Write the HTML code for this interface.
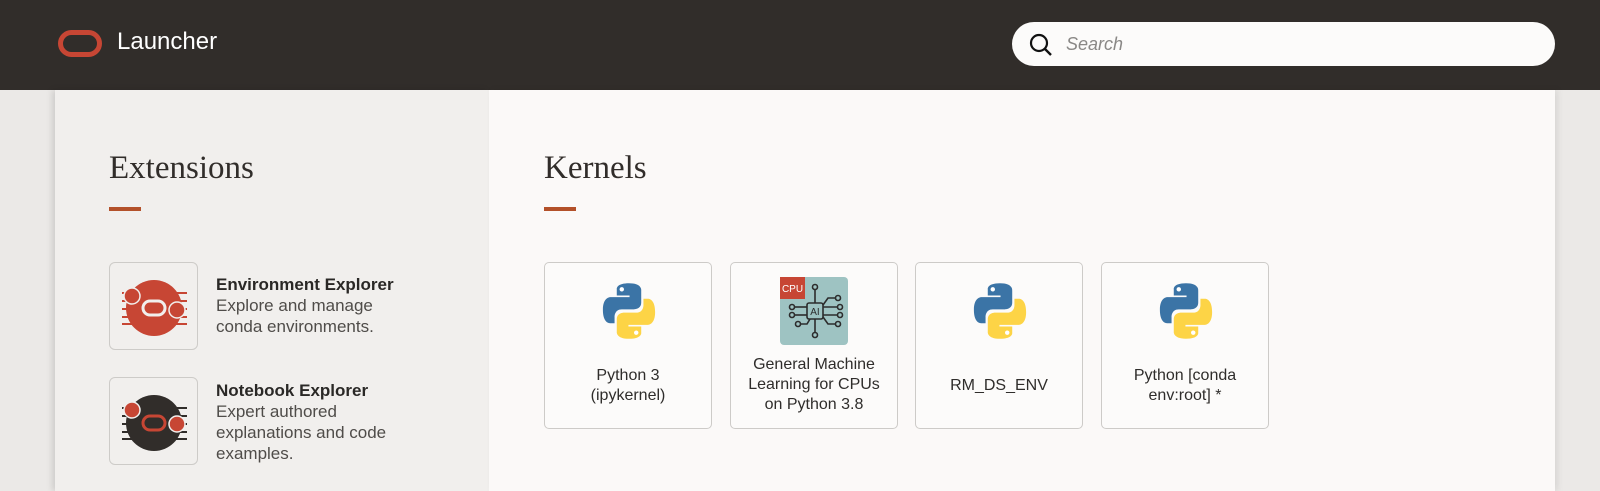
<!DOCTYPE html>
<html><head><meta charset="utf-8"><style>
*{margin:0;padding:0;box-sizing:border-box}
body{width:1600px;height:491px;overflow:hidden;background:#ebe9e7;font-family:"Liberation Sans",sans-serif;position:relative}
.hdr{position:absolute;left:0;top:0;width:1600px;height:90px;background:#312d2a}
.logo{position:absolute;left:58px;top:30px;width:44px;height:27px;border:5px solid #c74634;border-radius:14px}
.title{position:absolute;left:117px;top:28px;color:#fff;font-size:24px}
.search{position:absolute;left:1012px;top:22px;width:543px;height:44px;background:#fcfbfa;border-radius:22px}
.search span{position:absolute;left:54px;top:12px;font-style:italic;color:#8a8886;font-size:18px}
.left{position:absolute;left:55px;top:90px;width:434px;height:401px;background:#f1efed;box-shadow:-3px 0 6px rgba(0,0,0,.12)}
.right{position:absolute;left:489px;top:90px;width:1066px;height:401px;background:#fbf9f8;box-shadow:3px 0 6px rgba(0,0,0,.08)}
h2{position:absolute;font-family:"Liberation Serif",serif;font-weight:normal;font-size:33px;color:#312d2a;top:150px}
.bar{position:absolute;top:207px;width:32px;height:4px;background:#b3512a}
.ibox{position:absolute;left:109px;width:89px;height:88px;border:1px solid #cdcbc8;border-radius:6px;background:#f1efed}
.et{position:absolute;left:216px;font-size:17px;color:#4f4c49;line-height:21px}
.et b{color:#2a2826}
.card{position:absolute;top:262px;width:168px;height:167px;border:1px solid #cdcbc8;border-radius:5px;background:#fcfbfa;text-align:center;font-size:16px;color:#2f2d2b;line-height:20px}
.card svg{position:absolute;left:54px;top:18px}
.card .t{position:absolute;left:0;right:0}
</style></head><body>
<div class="hdr"><div class="logo"></div><div class="title">Launcher</div>
<div class="search"><svg style="position:absolute;left:16px;top:10px" width="26" height="26" viewBox="0 0 26 26"><circle cx="11" cy="11" r="8" fill="none" stroke="#111" stroke-width="2.2"/><line x1="17" y1="17" x2="23" y2="23" stroke="#111" stroke-width="2.4"/></svg><span>Search</span></div></div>
<div class="left"></div><div class="right"></div>
<h2 style="left:109px">Extensions</h2><div class="bar" style="left:109px"></div>
<h2 style="left:544px">Kernels</h2><div class="bar" style="left:544px"></div>

<div class="ibox" style="top:262px"><svg width="89" height="88" viewBox="0 0 89 88">
<g stroke="#c74634" stroke-width="2"><line x1="12" y1="30" x2="77" y2="30"/><line x1="12" y1="38" x2="77" y2="38"/><line x1="12" y1="46" x2="77" y2="46"/><line x1="12" y1="54" x2="77" y2="54"/><line x1="12" y1="61" x2="77" y2="61"/></g>
<circle cx="44" cy="45" r="28" fill="#c74634"/><circle cx="22" cy="33" r="8" fill="#c74634" stroke="#f1efed" stroke-width="1.5"/><circle cx="67" cy="47" r="8" fill="#c74634" stroke="#f1efed" stroke-width="1.5"/>
<rect x="33" y="38" width="22" height="14" rx="7" fill="none" stroke="#f1efed" stroke-width="3"/></svg></div>
<div class="et" style="top:274px"><b>Environment Explorer</b><br>Explore and manage<br>conda environments.</div>

<div class="ibox" style="top:377px"><svg width="89" height="88" viewBox="0 0 89 88">
<g stroke="#312d2a" stroke-width="2"><line x1="12" y1="30" x2="77" y2="30"/><line x1="12" y1="38" x2="77" y2="38"/><line x1="12" y1="46" x2="77" y2="46"/><line x1="12" y1="54" x2="77" y2="54"/><line x1="12" y1="61" x2="77" y2="61"/></g>
<circle cx="44" cy="45" r="28" fill="#312d2a"/><circle cx="22" cy="32" r="8" fill="#c74634" stroke="#f1efed" stroke-width="1.5"/><circle cx="67" cy="46" r="8" fill="#c74634" stroke="#f1efed" stroke-width="1.5"/>
<rect x="33" y="38" width="22" height="14" rx="7" fill="none" stroke="#c74634" stroke-width="3"/></svg></div>
<div class="et" style="top:380px"><b>Notebook Explorer</b><br>Expert authored<br>explanations and code<br>examples.</div>

<svg width="0" height="0" style="position:absolute"><defs><g id="py">
<path d="M54,4C30,4 32,15 32,15L32,26L55,26L55,29L22,29C22,29 7,27 7,52C7,77 20,76 20,76L28,76L28,64C28,64 28,51 41,51L63,51C63,51 76,51 76,39L76,17C76,17 78,4 54,4Z" fill="#3b74a6"/>
<circle cx="41" cy="15" r="4" fill="#fff"/>
<path d="M54,104C78,104 76,93 76,93L76,82L53,82L53,79L86,79C86,79 101,81 101,56C101,31 88,32 88,32L80,32L80,44C80,44 80,57 67,57L45,57C45,57 32,57 32,69L32,91C32,91 30,104 54,104Z" fill="#fdd446"/>
<circle cx="67" cy="93" r="4" fill="#fff"/></g></defs></svg>

<div class="card" style="left:544px"><svg width="60" height="60" viewBox="0 0 108 108"><use href="#py"/></svg><div class="t" style="top:103px">Python 3<br>(ipykernel)</div></div>
<div class="card" style="left:730px"><svg width="68" height="68" viewBox="0 0 68 68" style="left:49px;top:14px"><rect width="68" height="68" rx="4" fill="#9ec3c2"/><rect width="25" height="22" fill="#c74634"/><text x="12.5" y="15" font-size="10" fill="#fff" text-anchor="middle" font-family="Liberation Sans">CPU</text>
<g stroke="#2c2c2c" stroke-width="1.6" fill="none"><rect x="27" y="26" width="16" height="16" rx="2"/><line x1="35" y1="26" x2="35" y2="12"/><circle cx="35" cy="10" r="2.5"/><line x1="35" y1="42" x2="35" y2="56"/><circle cx="35" cy="58" r="2.5"/><line x1="27" y1="30" x2="15" y2="30"/><circle cx="12" cy="30" r="2.5"/><line x1="27" y1="38" x2="15" y2="38"/><circle cx="12" cy="38" r="2.5"/><path d="M43,30H58M43,38H58M43,28L48,21H56M43,40L48,47H56M30,42L27,47H20"/><circle cx="58" cy="21" r="2.5"/><circle cx="60" cy="30" r="2.5"/><circle cx="60" cy="38" r="2.5"/><circle cx="58" cy="47" r="2.5"/><circle cx="18" cy="47" r="2.5"/></g>
<text x="35" y="38" font-size="10" fill="#2c2c2c" text-anchor="middle" font-family="Liberation Sans">AI</text></svg><div class="t" style="top:92px">General Machine<br>Learning for CPUs<br>on Python 3.8</div></div>
<div class="card" style="left:915px"><svg width="60" height="60" viewBox="0 0 108 108"><use href="#py"/></svg><div class="t" style="top:113px">RM_DS_ENV</div></div>
<div class="card" style="left:1101px"><svg width="60" height="60" viewBox="0 0 108 108"><use href="#py"/></svg><div class="t" style="top:103px">Python [conda<br>env:root] *</div></div>
</body></html>
